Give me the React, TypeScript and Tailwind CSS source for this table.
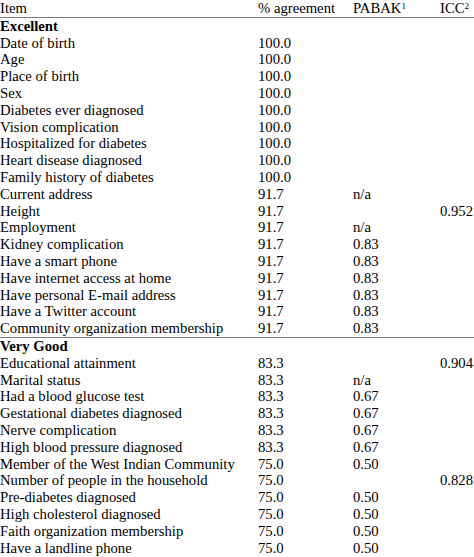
import React from 'react';

type Row = {
  item: string;
  agree?: string;
  pabak?: string;
  icc?: string;
  heading?: boolean;
  rule?: boolean;
};

const rows: Row[] = [
  { item: 'Excellent', heading: true },
  { item: 'Date of birth', agree: '100.0' },
  { item: 'Age', agree: '100.0' },
  { item: 'Place of birth', agree: '100.0' },
  { item: 'Sex', agree: '100.0' },
  { item: 'Diabetes ever diagnosed', agree: '100.0' },
  { item: 'Vision complication', agree: '100.0' },
  { item: 'Hospitalized for diabetes', agree: '100.0' },
  { item: 'Heart disease diagnosed', agree: '100.0' },
  { item: 'Family history of diabetes', agree: '100.0' },
  { item: 'Current address', agree: '91.7', pabak: 'n/a' },
  { item: 'Height', agree: '91.7', icc: '0.952' },
  { item: 'Employment', agree: '91.7', pabak: 'n/a' },
  { item: 'Kidney complication', agree: '91.7', pabak: '0.83' },
  { item: 'Have a smart phone', agree: '91.7', pabak: '0.83' },
  { item: 'Have internet access at home', agree: '91.7', pabak: '0.83' },
  { item: 'Have personal E-mail address', agree: '91.7', pabak: '0.83' },
  { item: 'Have a Twitter account', agree: '91.7', pabak: '0.83' },
  { item: 'Community organization membership', agree: '91.7', pabak: '0.83', rule: true },
  { item: 'Very Good', heading: true },
  { item: 'Educational attainment', agree: '83.3', icc: '0.904' },
  { item: 'Marital status', agree: '83.3', pabak: 'n/a' },
  { item: 'Had a blood glucose test', agree: '83.3', pabak: '0.67' },
  { item: 'Gestational diabetes diagnosed', agree: '83.3', pabak: '0.67' },
  { item: 'Nerve complication', agree: '83.3', pabak: '0.67' },
  { item: 'High blood pressure diagnosed', agree: '83.3', pabak: '0.67' },
  { item: 'Member of the West Indian Community', agree: '75.0', pabak: '0.50' },
  { item: 'Number of people in the household', agree: '75.0', icc: '0.828' },
  { item: 'Pre-diabetes diagnosed', agree: '75.0', pabak: '0.50' },
  { item: 'High cholesterol diagnosed', agree: '75.0', pabak: '0.50' },
  { item: 'Faith organization membership', agree: '75.0', pabak: '0.50' },
  { item: 'Have a landline phone', agree: '75.0', pabak: '0.50' },
];

const App: React.FC = () => {
  return (
    <div className="w-[474px] h-[557px] overflow-hidden bg-white text-black text-[14.7px] leading-[16.8px] font-['Liberation_Serif','Times_New_Roman',serif]">
      <div className="grid grid-cols-[258px_95px_87px_1fr] border-b-[1.5px] border-[#7a7a7a] whitespace-nowrap">
        <div>Item</div>
        <div>% agreement</div>
        <div>
          PABAK<sup className="text-[9px]">1</sup>
        </div>
        <div>
          ICC<sup className="text-[9px]">2</sup>
        </div>
      </div>

      {rows.map((row) => (
        <div
          key={row.item}
          className={`grid grid-cols-[258px_95px_87px_1fr] whitespace-nowrap ${
            row.rule ? 'border-b-[1.5px] border-[#7a7a7a]' : ''
          }`}
        >
          <div className={row.heading ? 'font-bold' : ''}>{row.item}</div>
          <div>{row.agree}</div>
          <div>{row.pabak}</div>
          <div>{row.icc}</div>
        </div>
      ))}
    </div>
  );
};

export default App;
